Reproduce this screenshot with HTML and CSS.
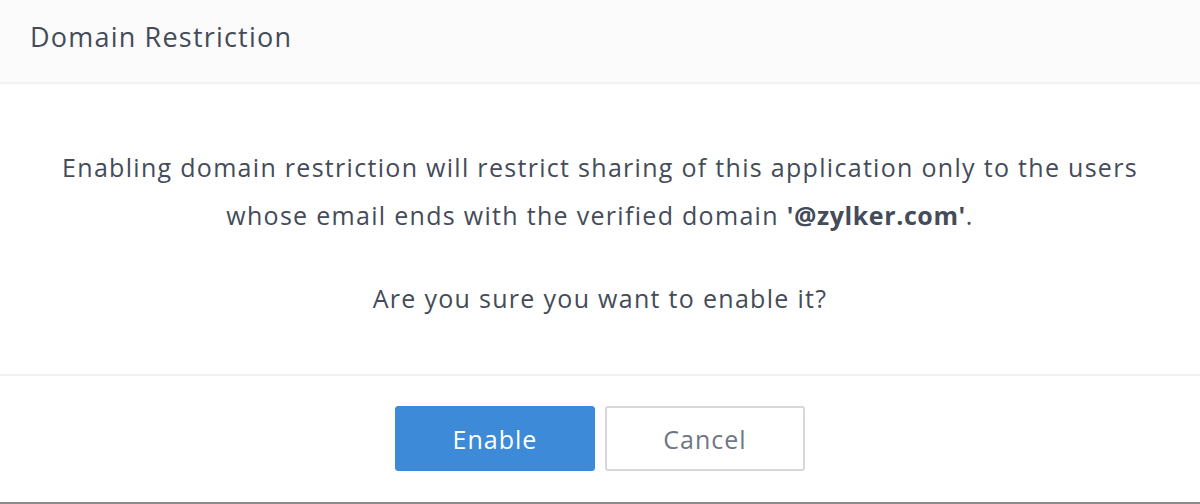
FILE: index.html
```html
<!DOCTYPE html>
<html>
<head>
<meta charset="utf-8">
<link rel="stylesheet" href="styles.css">
</head>
<body>
<div class="dialog">
  <div class="header">Domain Restriction</div>
  <div class="content">
    <p class="msg">Enabling domain restriction will restrict sharing of this application only to the users<br>whose email ends with the verified domain <b>'@zylker.com'</b>.</p>
    <p class="msg q">Are you sure you want to enable it?</p>
  </div>
  <div class="footer">
    <button class="btn primary">Enable</button>
    <button class="btn secondary">Cancel</button>
  </div>
</div>
</body>
</html>
```
FILE: styles.css
```css
html, body {
  margin: 0;
  padding: 0;
  background: #ffffff;
}
.dialog {
  width: 1200px;
  height: 504px;
  display: flex;
  flex-direction: column;
  font-family: "Open Sans", "Noto Sans", sans-serif;
  color: #444b59;
  box-sizing: border-box;
  border-bottom: 2px solid #8a8a8a;
}
.header {
  height: 84px;
  box-sizing: border-box;
  background: #fbfbfc;
  border-bottom: 2px solid #f1f1f3;
  padding: 17px 30px 0;
  font-size: 27px;
  line-height: 40px;
  letter-spacing: 1.2px;
}
.content {
  height: 292px;
  box-sizing: border-box;
  border-bottom: 2px solid #f1f1f3;
  padding-top: 59px;
  text-align: center;
}
.msg {
  margin: 0;
  font-size: 25px;
  line-height: 48px;
  letter-spacing: 1.3px;
}
.msg b {
  font-weight: 700;
  letter-spacing: 0.6px;
}
.q {
  margin-top: 35px;
}
.footer {
  flex: 1;
  display: flex;
  justify-content: center;
  align-items: flex-start;
  gap: 10px;
  padding-top: 30px;
}
.btn {
  width: 200px;
  height: 65px;
  box-sizing: border-box;
  font-family: inherit;
  font-size: 25px;
  letter-spacing: 1px;
  border-radius: 3px;
  cursor: pointer;
}
.primary {
  background: #3d8ad8;
  border: 1px solid #3d8ad8;
  color: #ffffff;
}
.secondary {
  background: #ffffff;
  border: 2px solid #d8d8d8;
  color: #6f7782;
}
```
